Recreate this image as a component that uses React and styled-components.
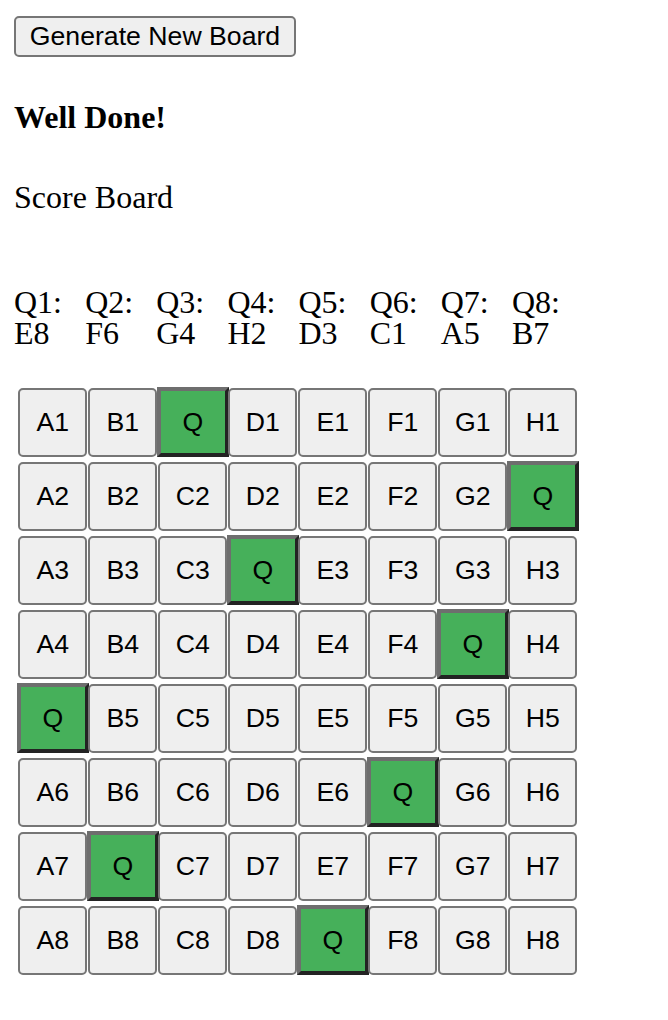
import React from 'react';
import styled, { createGlobalStyle, css } from 'styled-components';

const Global = createGlobalStyle`
  html, body { margin: 0; padding: 0; background: #fff; }
  body {
    font-family: "Liberation Serif", "Times New Roman", serif;
    color: #000;
  }
`;

const Page = styled.div`
  padding: 16px 0 40px 14px;
  display: flex;
  flex-direction: column;
  align-items: flex-start;
`;

const GenerateButton = styled.button`
  box-sizing: border-box;
  width: 282px;
  height: 41px;
  padding: 0 12px;
  font-family: "Liberation Sans", Arial, sans-serif;
  font-size: 26.67px;
  color: #000;
  background: #efefef;
  border: 2px solid #767676;
  border-radius: 5px;
`;

const Status = styled.div`
  margin-top: 42px;
  font-size: 32px;
  line-height: 36px;
  font-weight: bold;
`;

const Title = styled.div`
  margin-top: 44px;
  font-size: 32px;
  line-height: 36px;
`;

const ScoreRow = styled.div`
  margin-top: 71.5px;
  display: grid;
  grid-template-columns: repeat(8, 71.14px);
  font-size: 32px;
  line-height: 31px;
`;

const ScoreItem = styled.div`
  white-space: normal;
`;

const Board = styled.div`
  margin-top: 39.3px;
  margin-left: 4.3px;
  display: grid;
  grid-template-columns: repeat(8, 70px);
  grid-auto-rows: 69px;
  row-gap: 5px;
`;

const Cell = styled.button`
  box-sizing: border-box;
  width: 69px;
  height: 69px;
  padding: 0;
  font-family: "Liberation Sans", Arial, sans-serif;
  font-size: 26.67px;
  color: #000;
  background: #efefef;
  border: 2px solid #767676;
  border-radius: 5px;
  display: flex;
  align-items: center;
  justify-content: center;
  ${(p) =>
    p.$queen &&
    css`
      width: 72px;
      height: 70px;
      margin: -0.5px 0 0 -1.5px;
      background: #46b05a;
      border-width: 4px;
      border-style: solid;
      border-color: #6e6e6e #232323 #232323 #6e6e6e;
      border-radius: 0;
    `}
`;

const cols = ['A', 'B', 'C', 'D', 'E', 'F', 'G', 'H'];
const placement = ['E8', 'F6', 'G4', 'H2', 'D3', 'C1', 'A5', 'B7'];

export default function App() {
  const queens = new Set(placement);
  const rows = [1, 2, 3, 4, 5, 6, 7, 8];
  return (
    <>
      <Global />
      <Page>
        <GenerateButton>Generate New Board</GenerateButton>
        <Status>Well Done!</Status>
        <Title>Score Board</Title>
        <ScoreRow>
          {placement.map((p, i) => (
            <ScoreItem key={p}>{`Q${i + 1}: ${p}`}</ScoreItem>
          ))}
        </ScoreRow>
        <Board>
          {rows.map((r) =>
            cols.map((c) => {
              const id = `${c}${r}`;
              const q = queens.has(id);
              return (
                <Cell key={id} $queen={q}>
                  {q ? 'Q' : id}
                </Cell>
              );
            })
          )}
        </Board>
      </Page>
    </>
  );
}
